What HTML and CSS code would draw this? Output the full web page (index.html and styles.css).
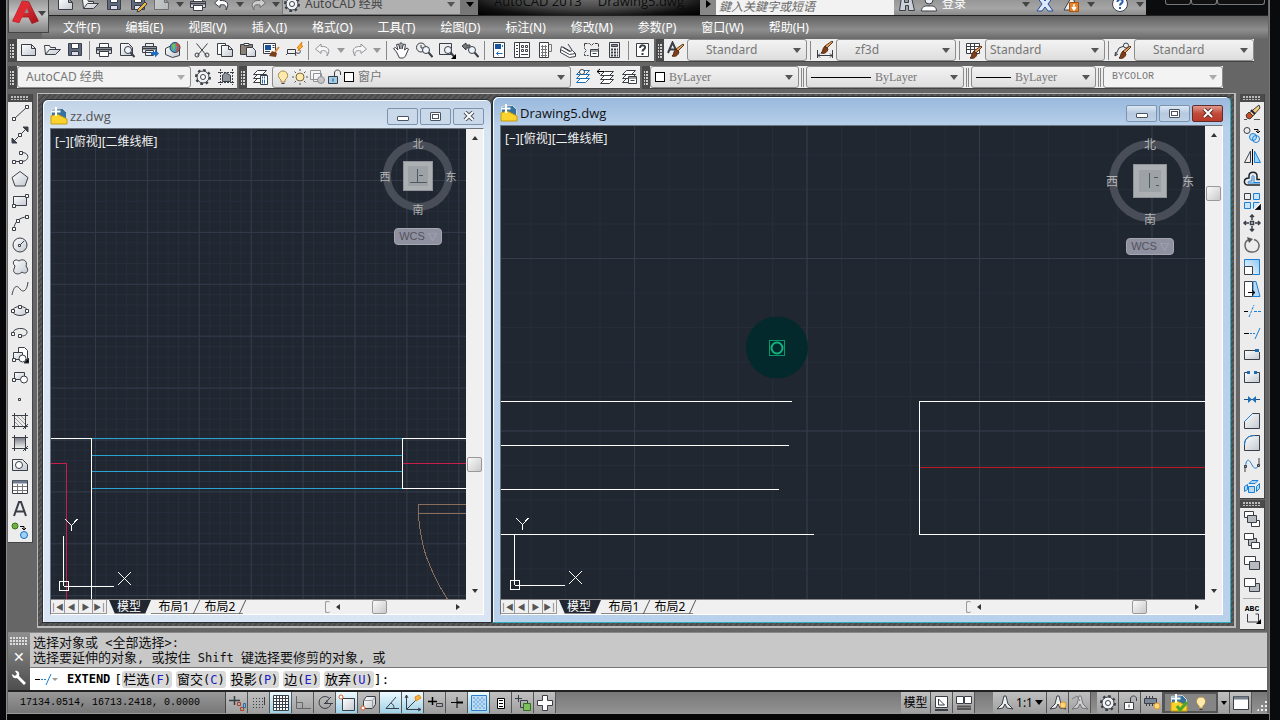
FILE: index.html
```html
<!DOCTYPE html>
<html lang="zh-CN">
<head>
<meta charset="utf-8">
<meta name="viewport" content="width=device-width, initial-scale=1">
<title>AutoCAD 2013 - Drawing5.dwg</title>
<link rel="stylesheet" href="styles.css">
</head>
<body>
<svg class="defs" aria-hidden="true">
<defs>
<linearGradient id="gr" x1="0" y1="0" x2="1" y2="1"><stop offset="0" stop-color="#fff"/><stop offset="1" stop-color="#c3c8d0"/></linearGradient>
<linearGradient id="gb" x1="0" y1="1" x2="1" y2="0"><stop offset="0" stop-color="#fff"/><stop offset="1" stop-color="#8fc6ef"/></linearGradient>
<linearGradient id="gd" x1="0" y1="0" x2="0" y2="1"><stop offset="0" stop-color="#777b84"/><stop offset="1" stop-color="#f5f5f5"/></linearGradient>
<linearGradient id="red" x1="0" y1="0" x2="1" y2="1"><stop offset="0" stop-color="#f4444a"/><stop offset="1" stop-color="#a90f18"/></linearGradient>
<pattern id="fine" width="10.38" height="10.38" patternUnits="userSpaceOnUse" x="95" y="180"><path d="M.5 0V11M0 .5H11" stroke="#262d3b" fill="none"/></pattern>
<pattern id="fineMajor" width="51.9" height="51.9" patternUnits="userSpaceOnUse" x="95" y="180"><path d="M.5 0V52M0 .5H52" stroke="#323a4a" fill="none"/></pattern>
<pattern id="wide" width="34.5" height="34.5" patternUnits="userSpaceOnUse" x="634" y="258"><path d="M.5 0V35M0 .5H35" stroke="#252d39" fill="none"/></pattern>
<pattern id="wideMajor" width="172.5" height="172.5" patternUnits="userSpaceOnUse" x="634" y="258"><path d="M.5 0V173M0 .5H173" stroke="#343c4b" fill="none"/></pattern>
<g id="brush"><path d="M17 4l-6 6-2-2 7-5z" fill="#e9a05a" stroke="#5c3a1f"/><path d="M9 8l3 3c-1 4-4 5-7 4 2-1 1-4 4-7z" fill="#7d3f1b" stroke="#52280f"/></g>
<g id="new"><path d="M1.500 3.500h10l4 4v7h-14zM11.500 3.500v4h4" fill="url(#gr)"/></g>
<g id="open"><path d="M2.500 13.500l-1-9h5l1 2h5v2M2.500 13.500l4-5h11l-5 5z" fill="url(#gr)"/></g>
<g id="save"><path d="M2.500 2.500h13v12h-13z" fill="#5f6b7c"/><path d="M5.500 2.500h7v5h-7z" fill="#fff"/><path d="M5.500 10.500h7v4h-7z" fill="#dde"/></g>
<g id="print"><path d="M4.500 6V2.500h9V6" fill="#fff"/><path d="M1.500 6.500h15v6h-15z" fill="#d5d8de"/><path d="M4 10.500h10M4.500 10.500v5h9v-5" fill="#fff"/><path d="M2 8.500h14" stroke-width="2"/></g>
<g id="mag"><circle cx="10" cy="9" r="3.500" fill="#eef6fc"/><path d="M12.500 11.500l4 4.500" stroke-width="2"/></g>
<g id="preview"><path d="M2.500 2.500h8l4 4v8h-12z" fill="url(#gr)"/><use href="#mag"/></g>
<g id="publish"><path d="M4.500 5V2.500h8V5M1.500 5.500h14v6h-14zM4.500 9.500h8v5h-8z" fill="#eceef2"/><path d="M2 7.500h13" stroke-width="2"/><path d="M10 11h4V8.500l4 4-4 4V14h-4z" fill="#1b6ec2" stroke="none"/></g>
<g id="globe"><path d="M1.500 7.500l8-4 6 3v8l-7 2-7-3z" fill="url(#gr)"/><circle cx="11" cy="6.500" r="5" fill="#3d9fd8"/><path d="M8 4c3-3 4 0 3 2s0 5-2 3z" fill="#7bbf3d" stroke="none"/><path d="M12 3c3 1 3 5 0 7" stroke="#e0482f" stroke-width="2"/></g>
<g id="cut"><path d="M3.500 2.500l10 12M14.500 2.500l-10 12"/><circle cx="4" cy="14" r="2"/><circle cx="14" cy="14" r="2"/></g>
<g id="copy"><path d="M1.500 2.500h8v11h-8z" fill="#fff"/><path d="M5.500 4.500h7l4 4v7h-11zM12.500 4.500v4h4" fill="url(#gr)"/></g>
<g id="paste"><path d="M1.500 3.500h12v10h-12z" fill="#8d8175"/><path d="M5 2.500h5v2H5z" fill="#fff"/><path d="M7.500 6.500h6l3 3v6h-9z" fill="url(#gr)"/></g>
<g id="match"><path d="M1.500 2.500h12v10h-12z" fill="#fff"/><path d="M3 4h6v5H3z" fill="#17529c" stroke="none"/><path d="M10.500 4.500h2M10.500 6.500h2M3 10.500h5"/><path d="M17 6l-4 5" stroke="#df8a3b" stroke-width="2"/><path d="M10 10l5 2-1 4-7-1z" fill="#7d3f1b" stroke="none"/></g>
<g id="bedit"><path d="M2.500 8.500h8v4h-8zM10.500 11.500c4 2 6 0 4-3"/><path d="M3 12l-2 2M10 12l1 3"/><path d="M12 7l5-6-1 4h2l-5 5 1-3z" fill="#ffae2b" stroke="#e18518"/></g>
<g id="undo"><path d="M7 3L1.500 8 7 12.500V10c4-1 7 0 6 5 4-6 1-10-6-9.500z" fill="#fff"/></g>
<g id="redo"><path d="M11 3l5.500 5-5.500 4.500V10c-4-1-7 0-6 5-4-6-1-10 6-9.500z" fill="#fff"/></g>
<g id="pan"><path d="M4.500 11L1.500 7.500l2-1L6 9 4.500 3.500l2-.5 1.500 5V2h2v6l1.500-5 2 .5L12.500 9l2.500-2 1.500 1-3 7-2 2h-4z" fill="#fff"/></g>
<g id="zrt"><circle cx="6" cy="6.500" r="4.500"/><path d="M6 4v3h4"/><use href="#mag" x="1"/></g>
<g id="zwin"><path d="M1.500 2.500h12v11h-12z"/><use href="#mag"/><path d="M18 13v5h-5z" fill="#000" stroke="none"/></g>
<g id="zprev"><path d="M1 5l4-3v2h4v3H5v2z" fill="#777"/><use href="#mag" x="1"/></g>
<g id="props"><path d="M3.500 1.500h11v15h-11z" fill="#fff"/><path d="M5 3h6v5H5z" fill="#17529c" stroke="none"/><path d="M6.500 12.500h6M6.500 12.500l2-2M6.500 12.500l2 2M12.500 4v2" stroke="#246bb2"/></g>
<g id="dc"><path d="M1.500 1.500h15v15h-15zM6.500 2v14" fill="#fff"/><path d="M3 4.500h2M3 7.500h2M3 10.500h2M3 13.500h2M8.500 4.500h2v2h-2zM12.500 4.500h2v2h-2zM8.500 8.500h2v2h-2zM12.500 8.500h2v2h-2zM8 13.500h7"/></g>
<g id="pal"><path d="M3.500 1.500h9v15h-9z" fill="#fff"/><path d="M12.500 3.500h3v7h-3M5 5.500h6M5 8.500h6M5 11.500h6M5 14.500h6M6.500 4v12M9.500 4v12" stroke="#777"/></g>
<g id="sheet"><path d="M1.500 8.500l9 5 6-1-3-3-3 1-8-5zM1.500 8.500v3l9 5 6-1v-3M4 6l7 4M9 3l4 6" fill="#fff"/></g>
<g id="markup"><path d="M2.500 2.500h5l2 2 2-2h5v5l-2 2M2.500 2.500v5l2 2-2 2v3h4" stroke-dasharray="3 1"/><path d="M8.500 8.500h8v7h-8zM8.500 10h8M10.500 12.500h4" fill="#fff"/></g>
<g id="calc"><path d="M4.500 1.500h10v15h-10z" fill="#eee"/><path d="M6.500 3.500h6v2h-6z" fill="#8a909a"/><path d="M6 8.500h7M6 11.500h7M6 14.500h7" stroke-dasharray="2 1" stroke-width="2"/></g>
<g id="help"><path d="M2.500 2.500h12v13h-12z" fill="#fff"/><path d="M6 7c0-4 6-3 5 0-.5 1.500-2.500 1.500-2.500 3.500M8.500 12v2" stroke-width="2"/></g>
<g id="tstyle"><path d="M1 12L5.500 1.500 9.500 10M3 8.500h5" stroke-width="2"/><use href="#brush"/></g>
<g id="dstyle"><path d="M1.500 9v8M16.500 9v8M2 14.500h14M4 12.500l-2 2 2 2M14 12.500l2 2-2 2"/><use href="#brush" x="0" y="-3"/></g>
<g id="tbstyle"><path d="M1.500 2.500h13v10h-13zM2 5.500h12M2 8.500h12M5.500 3v9M9.500 3v9" fill="#fff"/><use href="#brush" y="2"/></g>
<g id="mstyle"><path d="M1 15L5 7l5-2M1 15l.5-4M1 15l3-2"/><circle cx="12" cy="4.500" r="2.500"/><use href="#brush" y="2"/></g>
<g id="gear"><circle cx="9" cy="9" r="6" fill="#f0f1f4"/><circle cx="9" cy="9" r="7" stroke-dasharray="2.700 2.790" stroke-width="2"/><circle cx="9" cy="9" r="2.500" fill="#fff"/></g>
<g id="wsset"><path d="M1 4.500h16M1 14.500h16M3.500 1v16M15.500 1v16" stroke-dasharray="2 1"/><path d="M5.500 7l3-2.500 5 3v6h-8z" fill="#8e949e"/></g>
<g id="layers"><path d="M2.500 6.500l4-4h9l-4 4zM2.500 10.500l4-4h9l-4 4zM2.500 14.500l4-4h9l-4 4z" fill="#fff"/></g>
<g id="laymgr"><use href="#layers"/><path d="M9.500 7.500h7v9h-7z" fill="#fff"/><path d="M11 9.500h4M11 12.500h4M11 14.500h4" stroke="#246bb2" stroke-width="2" stroke-dasharray="1 1"/></g>
<g id="laycur"><g stroke="#1a6fb5"><use href="#layers"/></g><circle cx="8" cy="4" r="2.500" fill="#fff"/></g>
<g id="layprev"><use href="#layers" x="1" y="1"/><path d="M0 3.500h7M3 1L0 3.500 3 6" stroke="#000"/></g>
<g id="laystate"><use href="#layers"/><path d="M8.500 8.500h8v7h-8zM8.500 10h8M10.500 12.500h4" fill="#fff"/></g>
<g id="bulb"><path d="M7 12c-5-4-2-9 2-9s7 5 2 9v2H7z" fill="#ffe9ad" stroke="#a88a4a"/><path d="M7.500 15.500h3"/></g>
<g id="sun"><circle cx="9" cy="9" r="4" fill="#ffe9ad" stroke="#7d6a3c"/><path d="M9 1v2M9 15v2M1 9h2M15 9h2M3.500 3.500L5 5M13 13l1.500 1.500M14.500 3.500L13 5M5 13l-1.500 1.500" stroke="#555"/></g>
<g id="vpf" opacity=".5"><path d="M2.500 2.500h10v9h-10zM5.500 5.500h8v8h-8z" fill="#fff"/><circle cx="13" cy="12" r="3.500" fill="#aaa"/></g>
<g id="lock"><path d="M9.500 8V5c0-4 6-4 6 0v2"/><path d="M3.500 8.500h9v7h-9z" fill="#9dcdee"/><path d="M8 10.500v3"/></g>
<g id="unlock"><path d="M9.500 8V5c0-4 6-4 6 0v2"/><path d="M3.500 8.500h9v7h-9z" fill="#fff"/><path d="M8 10.500v3"/></g>
<g id="logo"><path d="M2 25L14 0l8 1 12 24-8 3-4-8h-9l-3 7z" fill="url(#red)" stroke="#a01820"/><path d="M15 15l4-8 3 8z" fill="#8f8f93" stroke="none"/><path d="M14 0L2 25l8 2 11-20z" fill="#e02931" stroke="none"/></g>
<g id="dwg"><path d="M1.500 2.500l11-1 4 4v11h-15z" fill="#36729e" stroke="#d3dce5"/><path d="M1 9l6-2 10 5v5H1z" fill="#fcd22c" stroke="#c59c11"/><path d="M6 0v9M1.500 4.500h9" stroke="#fff" stroke-width="2"/></g>
<g id="line"><path d="M3 15L16 3"/><path d="M1.500 13.500h3v3h-3zM14.500 1.500h3v3h-3z" fill="#fff"/></g>
<g id="xline"><path d="M2 16L16 2"/><path d="M1 17v-5l5 5zM17 1v5l-5-5z" fill="#3a3f47"/><path d="M7.500 7.500h3v3h-3z" fill="#fff"/></g>
<g id="pline"><path d="M3 13.500h7c9 0 9-9 1-9"/><path d="M1.500 12.500h3v3h-3zM8.500 12.500h3v3h-3zM8.500 3.500h3v3h-3z" fill="#fff"/></g>
<g id="poly"><path d="M9 1.500l8 6-3 8.500H4L1 7.500z" fill="url(#gr)"/></g>
<g id="rect"><path d="M2.500 4.500h13v9h-13z" fill="url(#gr)"/><path d="M1.500 12.500h3v3h-3zM14.500 2.500h3v3h-3z" fill="#fff"/></g>
<g id="arc"><path d="M3 15C3 8 9 3 16 3"/><path d="M1.500 13.500h3v3h-3zM5.500 5.500h3v3h-3zM14.500 1.500h3v3h-3z" fill="#fff"/></g>
<g id="circle"><circle cx="9" cy="9" r="7" fill="url(#gr)"/><path d="M9 9l4-4"/><path d="M7.500 8.500h2v2h-2z" fill="#fff"/></g>
<g id="cloud"><path d="M4 8C0 4 4 0 8 3c4-3 9 0 7 5 4 5 0 9-4 6-4 4-10 1-8-3z" fill="url(#gr)"/></g>
<g id="spline"><path d="M1 15C3 5 6 5 9 9s7 2 8-7"/></g>
<g id="ellipse"><ellipse cx="9" cy="9" rx="7.500" ry="4.500" fill="url(#gr)"/><path d="M.5 7.500h3v3h-3zM14.500 7.500h3v3h-3zM7.500 3.500h3v3h-3z" fill="#fff"/></g>
<g id="earc"><path d="M2 10C1 3 16 3 16 8c0 4-4 4-7 4"/><path d="M.5 8.500h3v3h-3zM7.500 10.500h3v3h-3z" fill="#fff"/></g>
<g id="insert"><path d="M7.500 6V1.500h6l3 3v9h-3" fill="#fff"/><path d="M2.500 6.500h9v7h-9z" fill="url(#gr)"/><circle cx="11.500" cy="12.500" r="3.500" fill="#fff"/><path d="M1.500 12.500h3v3h-3z" fill="#fff"/><path d="M18 12v5h-5z" fill="#000"/></g>
<g id="block"><path d="M3.500 4.500h10v7h-10z" fill="url(#gr)"/><circle cx="13" cy="11.500" r="3.500" fill="#fff"/><path d="M1.500 10.500h3v3h-3z" fill="#fff"/></g>
<g id="point"><path d="M7.500 8.500h2v2h-2z"/></g>
<g id="hatch"><path d="M4 6l8 8M4 10l4 4M6 4l8 8M10 4l4 4" stroke="#999"/><path d="M1 3.500h16M1 14.500h16M3.500 1v16M14.500 1v16M12 17l5-5"/></g>
<g id="grad"><path d="M3.500 3.500h11v11h-11z" fill="url(#gd)"/><path d="M1 3.500h16M1 14.500h16M3.500 1v16M14.500 1v16M12 17l5-5"/></g>
<g id="region"><path d="M1.500 3.500h10l5 5v6h-15z" fill="url(#gr)"/><circle cx="8" cy="9" r="3.500" fill="#fff"/></g>
<g id="table"><path d="M1.500 2.500h15v13h-15z" fill="#fff"/><path d="M2 4h14" stroke-width="3" stroke="#6f7b8e"/><path d="M2 8.500h14M2 12.500h14M6.500 6v9M11.500 6v9" stroke="#777"/></g>
<g id="mtext"><path d="M3 16L8 2h2l5 14M5 11.500h8" stroke-width="2"/></g>
<g id="addsel"><circle cx="4" cy="4" r="3" fill="#72b046" stroke="#397019"/><circle cx="13" cy="13" r="3.500" fill="#9fd2fb" stroke="#1a6fb5"/><path d="M9 4.500h4v3M11 6l2 2 2-2" stroke="#000"/></g>
<g id="erase"><path d="M1 15.500h3M11 15.500h6" stroke="#555"/><path d="M16 1l1 3-8 9-4-3z" fill="#f4cb71"/><path d="M6 8l4 4-3 3-3-1-1-3z" fill="#cc4b22"/><path d="M8 6l4 4" stroke="#224" stroke-width="2"/></g>
<g id="copyobj"><circle cx="4" cy="4.500" r="3"/><circle cx="10" cy="11" r="3.500" stroke="#1a7fd5" fill="#bfe0fa"/><circle cx="13" cy="13" r="3.500" stroke="#1a7fd5"/><path d="M11 3.500h4v3M13 5l2 2 2-2" stroke="#000"/></g>
<g id="mirror"><path d="M7.500 3v11.500h-6z"/><path d="M11.500 3v11.500h6z" fill="#9fd2fb" stroke="#1a7fd5"/><path d="M9.500 1v16" stroke="#000"/></g>
<g id="offset"><path d="M17 9.500h-3V6c0-5-8-5-8 0v2c-6 0-6 7-1 7h12" stroke="#1d2229" stroke-width="1.500"/><path d="M17 12.500h-6V7c0-2-2-2-2 0v4c-4 0-4 1-4 2h12" stroke="#1a7fd5"/></g>
<g id="array"><path d="M1.500 1.500h6v6h-6z"/><path d="M10.500 1.500h6v6h-6zM1.500 10.500h6v6h-6zM10.500 16.500v-6h6" stroke="#1a7fd5" fill="#cae5fa"/><path d="M18 12v6h-6z" fill="#000"/></g>
<g id="move"><path d="M7.500 7.500h3v3h-3zM9 1v5M9 12v5M1 9h5M12 9h5M7 3l2-2 2 2M7 15l2 2 2-2M3 7L1 9l2 2M15 7l2 2-2 2" stroke-width="1.500"/></g>
<g id="rotate"><path d="M6 3.500C0 6 1 15 8 16c9 1 11-10 3-12.500" stroke="#666" stroke-width="1.500"/><path d="M4 1l6 2-4 4z" fill="#555" stroke="none"/></g>
<g id="scale"><path d="M1.500 8V1.500h15v15H10" stroke="#1a7fd5" fill="url(#gb)"/><path d="M1.500 8.500h8v8h-8z" fill="#fff"/></g>
<g id="stretch"><path d="M10 1.500h3l4 15h-7z" stroke="#1a7fd5" fill="#b4daf8"/><path d="M1.500 1.500h8v15h-8z" fill="#fff"/><path d="M5 12.500h7M9 10l3 2.500L9 15" stroke="#000"/></g>
<g id="trim"><path d="M1 9.500h4" stroke="#000"/><path d="M6 15L11 3M11 9.500h7" stroke="#1a7fd5" stroke-dasharray="3 1"/></g>
<g id="extend"><path d="M1 9.500h5" stroke="#000"/><path d="M7 9.500h5" stroke-dasharray="2 1" stroke="#1a7fd5"/><path d="M12 15l5-11" stroke="#1a7fd5"/></g>
<g id="break1"><path d="M12 4.500H1.500v9h15V6" fill="url(#gr)"/><path d="M12 3h4v3h-4z" fill="#1a6fb5" stroke="none"/></g>
<g id="break2"><path d="M5 4.500H1.500v10h15v-10H14" fill="url(#gr)"/><path d="M4 3h3v3H4zM11 3h3v3h-3z" fill="#1a6fb5" stroke="none"/></g>
<g id="join"><path d="M1 9.500h16" stroke="#1a4f85"/><path d="M5 6l4 3.500L5 13zM13 6L9 9.500l4 3.500z" fill="#1a6fb5" stroke="none"/></g>
<g id="chamfer"><path d="M1.500 9.500v7h15v-15h-7z" fill="url(#gr)"/><path d="M1.500 9.500l8-8" stroke="#1a7fd5"/></g>
<g id="fillet"><path d="M1.500 11v5.500h15v-15H12C5 1.500 1.500 5 1.500 11z" fill="url(#gr)"/><path d="M1.500 11C1.500 5 5 1.500 12 1.500" stroke="#1a7fd5"/></g>
<g id="blend"><path d="M2 16V9M16 2v8"/><path d="M2.500 10C4 0 7 5 9 9s5 4 6 1" stroke="#1a7fd5"/><path d="M1.500 9.500h2v2h-2zM14.500 8.500h2v2h-2z"/></g>
<g id="explode"><path d="M1.500 8.500l3-2v5l-3 2zM5.500 8.500h6v6h-6zM6 5.500l3-3h6l-3 3zM13.500 8.500l3-3v5l-3 3z" stroke="#1a7fd5" fill="#b4daf8"/></g>
<g id="front"><path d="M1.500 1.500h9v6h-9zM8.500 10.500h8v6h-8z" fill="#fff"/><path d="M4.500 5.500h9v7h-9z" fill="#b7bbc0"/></g>
<g id="back"><path d="M5.500 6.500h8v7h-8z" fill="#b7bbc0"/><path d="M1.500 1.500h9v6h-9zM8.500 10.500h8v6h-8z" fill="#fff"/></g>
<g id="above"><path d="M1.500 2.500h11v8h-11z" fill="#fff"/><path d="M6.500 7.500h10v8h-10z" fill="#b7bbc0"/></g>
<g id="under"><path d="M6.500 7.500h10v8h-10z" fill="#b7bbc0"/><path d="M1.500 2.500h11v8h-11z" fill="#fff"/></g>
<g id="snapi"><path d="M1 6.500h11M6.500 2v9" stroke-width="1.500"/><path d="M9.500 8.500h3v3h-3zM12.500 13.500h3v3h-3z" stroke="#b5402a"/><path d="M15.500 9.500h2v4h-2z" stroke="#1a6fb5"/></g>
<g id="dots"><path d="M3 4.500h10M3 7.500h10M3 10.500h10M3 13.500h12" stroke-dasharray="1 2"/><path d="M14.500 3v8"/></g>
<g id="gridi"><path d="M1.500 1.500h15v15h-15zM4.500 2v15M7.500 2v15M10.500 2v15M13.500 2v15M2 4.500h15M2 7.500h15M2 10.500h15M2 13.500h15" fill="#fff"/></g>
<g id="ortho"><path d="M2.500 2v12.500H17M2.500 8.500h6v6" stroke="#666"/></g>
<g id="polar"><path d="M13 4a6 6 0 1 0 2 5M8 10l7-7M8 9.500h9M11 6v4"/></g>
<g id="osnap"><path d="M4.500 4.500h12v12h-12z" fill="url(#gr)"/><circle cx="3" cy="3" r="2" fill="#fff" stroke="#d8602a"/></g>
<g id="os3"><path d="M3.500 6.500l3-4h9v8l-3 4h-9z" fill="url(#gr)"/><path d="M4 6.500h8.500v8M12.500 6.500l3-4" stroke="#999"/><circle cx="3" cy="14" r="2" fill="#fff" stroke="#d8602a"/></g>
<g id="otrack"><path d="M14 3L4 14.500h13M9 9c2 1 3 3 3 5"/></g>
<g id="ducs"><path d="M2.500 1v14.500H17M1 4l1.500-3L4 4M14 14l3 1.500-3 1.500M3 15L14 4"/><path d="M11 3l4-2 2 3-5 3z" fill="#ffb33b" stroke="#df8a1b"/></g>
<g id="dyn"><path d="M2 7.500h9M6.500 3v8" stroke="#000" stroke-width="1.500"/><path d="M10.500 9.500h6v3h-6z"/></g>
<g id="lwt"><path d="M3 8.500h6M9 3v11" stroke="#000"/><path d="M9 8.500h6" stroke="#000" stroke-width="2"/></g>
<g id="tpy"><path d="M1.500 1.500h15v15h-15z" fill="#bfdcf5" stroke="#2f7fc6"/><path d="M3 4h12M3 8h12M3 12h12" stroke="#86b9e6" stroke-width="2" stroke-dasharray="2 2"/><path d="M5 6h10M5 10h10M5 14h10" stroke="#86b9e6" stroke-width="2" stroke-dasharray="2 2"/></g>
<g id="qp"><path d="M5.500 4.500h7v10h-7z" fill="#fff" stroke="#000"/><path d="M7 6.500h4M7 9.500h4M7 12.500h4" stroke="#000"/></g>
<g id="sc"><path d="M1 4.500h7M4.500 1v7M6.500 6.500h7v7h-7z"/><path d="M9.500 9.500h7v7h-7z" fill="#7cbf5d" stroke="#31701d"/></g>
<g id="am"><path d="M6.500 1.500h5v5h5v5h-5v5h-5v-5h-5v-5h5z" fill="#fff"/></g>
<g id="pspace"><path d="M2.500 2.500h12v11h-12z" fill="#fff"/><path d="M5.500 5v6h6z"/><path d="M2 16h13" stroke-width="2"/></g>
<g id="qv"><path d="M1.500 2.500h7v7h-7zM9.500 2.500h7v7h-7z" fill="#fff"/><path d="M2 12.500h14M2 15h14" stroke-width="2" stroke="#555"/></g>
<g id="ann"><path d="M8 2h2l2 8 5 5-6-1-2-4-2 4-6 1 5-5z" fill="#eee"/></g>
<g id="annv"><use href="#ann"/><circle cx="14" cy="11" r="3" fill="#ffd77c" stroke="#e99a2b"/></g>
<g id="anna" opacity=".5"><use href="#ann"/><path d="M1 5l5-3 3 5"/></g>
<g id="hw"><path d="M1.500 4.500h12v5h-12zM3.500 2v2M6.500 2v2M9.500 2v2M3.500 10v2M6.500 10v2M9.500 10v2" fill="#7a8595"/><circle cx="14" cy="12" r="3" fill="#ffd77c" stroke="#e99a2b"/></g>
<g id="dwgok"><use href="#dwg"/><path d="M7 12l3 4 7-8" stroke="#4da72b" stroke-width="3"/></g>
<g id="clean"><path d="M1.500 2.500h15v13h-15z" fill="#fff"/><path d="M2 4h14" stroke="#76808c" stroke-width="3"/></g>
<g id="wrench"><path d="M2 5c0 4 3 5 5 4l7 7 2-2-7-7c1-3-1-6-4-5l2 3-2 2z" fill="#fff" stroke="none"/></g>
<g id="binoc"><path d="M3.500 2.500h3v5h4v-5h3l3 13h-6v-5h-3v5h-6z" fill="#ccd2dc"/></g>
<g id="user"><circle cx="9" cy="5" r="4" fill="#e8ebf0"/><path d="M1.500 16c0-4 3-5 5-5h5c2 0 5 1 5 5z" fill="#fff"/></g>
<g id="xchg"><path d="M1 2h5l3 4 3-4h5l-5 7 5 7h-5l-3-4-3 4H1l5-7z" fill="#dce8fb" stroke="#2a4d96"/></g>
<g id="a360"><path d="M2 15L10 1l6 14z" fill="#eee"/><path d="M7.500 7.500h9v9h-9z" fill="#e5822b" stroke="#a75210"/><path d="M12 9v5M10 12l2 3 2-3" stroke="#fff" stroke-width="1.500"/></g>
<g id="qmark"><circle cx="9" cy="9" r="7.500" fill="#fff"/><path d="M6.500 7c0-4 6-3 5 0-.5 1.500-2.500 1.500-2.500 3.500M9 12v2" stroke="#255bb0" stroke-width="2"/></g>
</defs>
</svg>

<div class="app">
<header class="top">
  <button class="logo" aria-label="应用程序菜单"><svg width="29" height="26" viewBox="0 0 36 30"><use href="#logo" fill="none"/></svg><span class="tri"></span></button>
  <div class="titlebar">
    <div class="quick">
      <button class="b" aria-label="新建"><svg class="i"><use href="#new"/></svg></button>
      <button class="b" aria-label="打开"><svg class="i"><use href="#open"/></svg></button>
      <button class="b" aria-label="保存"><svg class="i"><use href="#save"/></svg></button>
      <button class="b" aria-label="另存为"><svg class="i"><use href="#save"/><path d="M9 14l7-7 2 2-7 7-3 1z" fill="#f2b53c"/></svg></button>
      <button class="b off" aria-label="上传"><svg class="i"><use href="#new"/></svg></button>
      <button class="dd" aria-label="更多"><span class="tri"></span></button>
      <button class="b" aria-label="打印"><svg class="i"><use href="#print"/></svg></button>
      <button class="b" aria-label="放弃"><svg class="i"><use href="#undo"/></svg></button>
      <button class="dd" aria-label="放弃列表"><span class="tri"></span></button>
      <button class="b off" aria-label="重做"><svg class="i"><use href="#redo"/></svg></button>
      <button class="dd" aria-label="重做列表"><span class="tri"></span></button>
      <div class="combo ws-top"><svg class="i"><use href="#gear"/></svg><select aria-label="工作空间"><option>AutoCAD 经典</option></select></div>
      <button class="dd more" aria-label="自定义快速访问"><span class="tri"></span></button>
    </div>
    <div class="caption"><span>AutoCAD 2013</span><span>Drawing5.dwg</span></div>
    <div class="info">
      <button class="dd side" aria-label="收拢"><i></i></button>
      <input class="search" type="text" aria-label="搜索" placeholder="鍵入关鍵字或短语">
      <button class="b" aria-label="查找"><svg class="i"><use href="#binoc"/></svg></button>
      <button class="login"><svg class="i"><use href="#user"/></svg>登录</button>
      <button class="dd push" aria-label="登录选项"><span class="tri"></span></button>
      <button class="b" aria-label="Exchange"><svg class="i"><use href="#xchg"/></svg></button>
      <button class="b" aria-label="联机"><svg class="i"><use href="#a360"/></svg></button>
      <button class="dd" aria-label="联机选项"><span class="tri"></span></button>
      <button class="b helpb" aria-label="帮助"><svg class="i"><use href="#qmark"/></svg></button>
      <button class="dd" aria-label="帮助选项"><span class="tri"></span></button>
    </div>
    <div class="syswin"><button aria-label="最小化"></button><button aria-label="还原"></button><button aria-label="关闭"></button></div>
  </div>
  <nav class="menu">
    <button>文件(F)</button><button>编辑(E)</button><button>视图(V)</button><button>插入(I)</button><button>格式(O)</button><button>工具(T)</button><button>绘图(D)</button><button>标注(N)</button><button>修改(M)</button><button>参数(P)</button><button>窗口(W)</button><button>帮助(H)</button>
  </nav>
</header>

<div class="bars">
  <div class="bar">
    <span class="grip"></span>
    <div class="set">
      <button class="b" aria-label="新建"><svg class="i"><use href="#new"/></svg></button>
      <button class="b" aria-label="打开"><svg class="i"><use href="#open"/></svg></button>
      <button class="b" aria-label="保存"><svg class="i"><use href="#save"/></svg></button>
      <i class="sep"></i>
      <button class="b" aria-label="打印"><svg class="i"><use href="#print"/></svg></button>
      <button class="b" aria-label="打印预览"><svg class="i"><use href="#preview"/></svg></button>
      <button class="b" aria-label="发布"><svg class="i"><use href="#publish"/></svg></button>
      <button class="b" aria-label="三维打印"><svg class="i"><use href="#globe"/></svg></button>
      <i class="sep"></i>
      <button class="b" aria-label="剪切"><svg class="i"><use href="#cut"/></svg></button>
      <button class="b" aria-label="复制"><svg class="i"><use href="#copy"/></svg></button>
      <button class="b" aria-label="粘贴"><svg class="i"><use href="#paste"/></svg></button>
      <button class="b" aria-label="特性匹配"><svg class="i"><use href="#match"/></svg></button>
      <button class="b" aria-label="块编辑器"><svg class="i"><use href="#bedit"/></svg></button>
      <i class="sep"></i>
      <button class="b off" aria-label="放弃"><svg class="i"><use href="#undo"/></svg></button>
      <button class="dd off" aria-label="放弃列表"><span class="tri"></span></button>
      <button class="b off" aria-label="重做"><svg class="i"><use href="#redo"/></svg></button>
      <button class="dd off" aria-label="重做列表"><span class="tri"></span></button>
      <i class="sep"></i>
      <button class="b" aria-label="平移"><svg class="i"><use href="#pan"/></svg></button>
      <button class="b" aria-label="实时缩放"><svg class="i"><use href="#zrt"/></svg></button>
      <button class="b" aria-label="窗口缩放"><svg class="i"><use href="#zwin"/></svg></button>
      <button class="b" aria-label="缩放上一个"><svg class="i"><use href="#zprev"/></svg></button>
      <i class="sep"></i>
      <button class="b" aria-label="特性"><svg class="i"><use href="#props"/></svg></button>
      <button class="b" aria-label="设计中心"><svg class="i"><use href="#dc"/></svg></button>
      <button class="b" aria-label="工具选项板"><svg class="i"><use href="#pal"/></svg></button>
      <button class="b" aria-label="图纸集"><svg class="i"><use href="#sheet"/></svg></button>
      <button class="b" aria-label="标记集"><svg class="i"><use href="#markup"/></svg></button>
      <button class="b" aria-label="计算器"><svg class="i"><use href="#calc"/></svg></button>
      <i class="sep"></i>
      <button class="b" aria-label="帮助"><svg class="i"><use href="#help"/></svg></button>
    </div>
    <span class="grip"></span>
    <div class="set">
      <button class="b" aria-label="文字样式"><svg class="i"><use href="#tstyle"/></svg></button>
      <div class="combo w120 indent"><select aria-label="文字样式"><option>Standard</option></select></div><i class="sep"></i>
      <button class="b" aria-label="标注样式"><svg class="i"><use href="#dstyle"/></svg></button>
      <div class="combo w120 indent"><select aria-label="标注样式"><option>zf3d</option></select></div><i class="sep"></i>
      <button class="b" aria-label="表格样式"><svg class="i"><use href="#tbstyle"/></svg></button>
      <div class="combo w120"><select aria-label="表格样式"><option>Standard</option></select></div><i class="sep"></i>
      <button class="b" aria-label="多重引线样式"><svg class="i"><use href="#mstyle"/></svg></button>
      <div class="combo w120 indent"><select aria-label="多重引线样式"><option>Standard</option></select></div>
    </div>
  </div>
  <div class="bar">
    <span class="grip"></span>
    <div class="set">
      <div class="combo w174 pale"><select aria-label="工作空间"><option>AutoCAD 经典</option></select></div>
      <button class="b" aria-label="工作空间设置"><svg class="i"><use href="#gear"/></svg></button>
      <button class="b" aria-label="我的工作空间"><svg class="i"><use href="#wsset"/></svg></button>
    </div>
    <span class="grip"></span>
    <div class="set">
      <button class="b wide" aria-label="图层特性"><svg class="i"><use href="#laymgr"/></svg></button>
      <div class="combo layer"><svg class="i"><use href="#bulb"/></svg><svg class="i"><use href="#sun"/></svg><svg class="i"><use href="#vpf"/></svg><svg class="i"><use href="#lock"/></svg><i class="swatch"></i><select aria-label="图层"><option>窗户</option></select></div>
      <button class="b" aria-label="置为当前"><svg class="i"><use href="#laycur"/></svg></button>
      <button class="b" aria-label="上一个图层"><svg class="i"><use href="#layprev"/></svg></button>
      <button class="b" aria-label="图层状态"><svg class="i"><use href="#laystate"/></svg></button>
    </div>
    <span class="grip"></span>
    <div class="set song">
      <div class="combo w148"><i class="swatch"></i><select aria-label="颜色"><option>ByLayer</option></select></div><i class="sep dbl"></i>
      <div class="combo w158"><i class="rule"></i><select aria-label="线型"><option>ByLayer</option></select></div><i class="sep dbl"></i>
      <div class="combo w124"><i class="rule short"></i><select aria-label="线宽"><option>ByLayer</option></select></div><i class="sep dbl"></i>
      <div class="combo w120 pale mono"><select aria-label="打印样式" disabled><option>BYCOLOR</option></select></div>
    </div>
  </div>
</div>

<div class="work">
  <aside class="side-tools">
    <div class="vbar"><span class="vgrip"></span>
      <button class="v" aria-label="直线"><svg class="i"><use href="#line"/></svg></button>
      <button class="v" aria-label="构造线"><svg class="i"><use href="#xline"/></svg></button>
      <button class="v" aria-label="多段线"><svg class="i"><use href="#pline"/></svg></button>
      <button class="v" aria-label="多边形"><svg class="i"><use href="#poly"/></svg></button>
      <button class="v" aria-label="矩形"><svg class="i"><use href="#rect"/></svg></button>
      <button class="v" aria-label="圆弧"><svg class="i"><use href="#arc"/></svg></button>
      <button class="v" aria-label="圆"><svg class="i"><use href="#circle"/></svg></button>
      <button class="v" aria-label="修订云线"><svg class="i"><use href="#cloud"/></svg></button>
      <button class="v" aria-label="样条曲线"><svg class="i"><use href="#spline"/></svg></button>
      <button class="v" aria-label="椭圆"><svg class="i"><use href="#ellipse"/></svg></button>
      <button class="v" aria-label="椭圆弧"><svg class="i"><use href="#earc"/></svg></button>
      <button class="v" aria-label="插入块"><svg class="i"><use href="#insert"/></svg></button>
      <button class="v" aria-label="创建块"><svg class="i"><use href="#block"/></svg></button>
      <button class="v" aria-label="点"><svg class="i"><use href="#point"/></svg></button>
      <button class="v" aria-label="图案填充"><svg class="i"><use href="#hatch"/></svg></button>
      <button class="v" aria-label="渐变色"><svg class="i"><use href="#grad"/></svg></button>
      <button class="v" aria-label="面域"><svg class="i"><use href="#region"/></svg></button>
      <button class="v" aria-label="表格"><svg class="i"><use href="#table"/></svg></button>
      <button class="v" aria-label="多行文字"><svg class="i"><use href="#mtext"/></svg></button>
      <button class="v" aria-label="添加选定对象"><svg class="i"><use href="#addsel"/></svg></button>
    </div>
  </aside>

  <main class="mdi">
    <section class="win back">
      <div class="wtitle"><svg class="i"><use href="#dwg"/></svg><h2>zz.dwg</h2>
        <button class="wb" aria-label="最小化"><i class="min"></i></button><button class="wb" aria-label="最大化"><i class="max"></i></button><button class="wb" aria-label="关闭"><svg width="12" height="10"><path d="M2 1l8 8M10 1L2 9" stroke="#4a5360" stroke-width="4"/><path d="M2 1l8 8M10 1L2 9" stroke="#fff" stroke-width="2"/></svg></button></div>
      <div class="wbody">
        <div class="view">
          <svg class="canvas"><g transform="translate(-51 -129)" fill="none" shape-rendering="crispEdges">
            <rect x="0" y="0" width="4000" height="3000" fill="url(#fine)"/><rect x="0" y="0" width="4000" height="3000" fill="url(#fineMajor)"/>
            <path d="M51 463.500H66.500V2000M403 463.500H2000" stroke="#c81e4c"/>
            <path d="M92 438.500H402M92 455.500H402M92 471.500H402M92 488.500H402" stroke="#2ba3d0"/>
            <path d="M51 438.500H91.500V2000M2000 438.500H402.500V488.500H2000" stroke="#fff"/>
            <path d="M2000 504.500H418.500V513.500H2000M418.500 513C419 530 424 552 428 561C434 576 440 588 448 600" stroke="#8a705c"/>
            <g stroke="#fff"><path d="M59.500 581.500h9v9h-9zM63.500 586V536M64 586.500H114"/><path d="M65 519l6.500 6.500 6-6.500M71.500 525v6M118 572l13 13M131 572l-13 13"/></g>
          </g></svg>
          <p class="vlabel">[−][俯视][二维线框]</p>
          <div class="cube">
            <svg width="78" height="82"><circle cx="39" cy="41" r="31" fill="none" stroke="#484d58" stroke-width="8"/><rect x="24.500" y="26.500" width="29" height="29" fill="#adb0b3" stroke="#8f9296"/><rect x="29" y="31" width="20" height="20" fill="#9da2a7"/><path d="M38.500 34v13M31 47.500h17M40 40.500h4" stroke="#505860"/><text x="39" y="13">北</text><text x="6" y="46">西</text><text x="72" y="46">东</text><text x="39" y="79">南</text></svg>
            <button class="wcs">WCS <span>▽</span></button>
          </div>
        </div>
        <div class="vs"><button class="up" aria-label="向上"></button><i class="g310"></i><b></b><i class="g110"></i><button class="down" aria-label="向下"></button></div>
        <div class="foot">
          <div class="tabs"><button class="nv" aria-label="第一个">|◀</button><button class="nv" aria-label="上一个">◀</button><button class="nv" aria-label="下一个">▶</button><button class="nv" aria-label="最后一个">▶|</button><button class="tab on">模型</button><button class="tab">布局1</button><button class="tab">布局2</button></div>
          <div class="hs"><i class="split"></i><button class="prev" aria-label="向左"></button><i class="g26"></i><b></b><i class="g63"></i><button class="next" aria-label="向右"></button></div>
        </div>
        <div class="corner"></div>
      </div>
    </section>

    <section class="win front">
      <div class="wtitle"><svg class="i"><use href="#dwg"/></svg><h2>Drawing5.dwg</h2>
        <button class="wb" aria-label="最小化"><i class="min"></i></button><button class="wb" aria-label="最大化"><i class="max"></i></button><button class="wb close" aria-label="关闭"><svg width="12" height="10"><path d="M2 1l8 8M10 1L2 9" stroke="#5a3030" stroke-width="4"/><path d="M2 1l8 8M10 1L2 9" stroke="#fff" stroke-width="2"/></svg></button></div>
      <div class="wbody">
        <div class="view">
          <svg class="canvas"><g transform="translate(-501 -126)" fill="none" shape-rendering="crispEdges">
            <rect x="0" y="0" width="4000" height="3000" fill="url(#wide)"/><rect x="0" y="0" width="4000" height="3000" fill="url(#wideMajor)"/>
            <path d="M501 401.500H792M501 445.500H789M501 489.500H779M501 534.500H814M4000 401.500H919.500V534.500H4000" stroke="#fff"/>
            <path d="M920 467.500H4000" stroke="#c01820"/>
            <circle cx="777" cy="347.500" r="31" fill="#03292d" shape-rendering="auto"/><path d="M769.500 340.500h15v15h-15z" stroke="#0a9a68"/><circle cx="777" cy="348" r="5.500" stroke="#12b67c" stroke-width="2" shape-rendering="auto"/>
            <g stroke="#fff"><path d="M510.500 580.500h9v9h-9zM514.500 585V535M515 585.500H565"/><path d="M516 518l6.500 6.500 6-6.500M522.500 524v6M569 571l13 13M582 571l-13 13"/></g>
          </g></svg>
          <p class="vlabel">[−][俯视][二维线框]</p>
          <div class="cube big">
            <svg width="90" height="92"><circle cx="45" cy="46" r="37" fill="none" stroke="#484d58" stroke-width="8"/><rect x="28.500" y="29.500" width="33" height="33" fill="#adb0b3" stroke="#8f9296"/><rect x="34" y="35" width="22" height="22" fill="#9da2a7"/><path d="M44.500 38v15M49 42.500h4M51 50.500h3" stroke="#505860"/><text x="45" y="14">北</text><text x="7" y="51">西</text><text x="83" y="51">东</text><text x="45" y="89">南</text></svg>
            <button class="wcs">WCS <span>▽</span></button>
          </div>
        </div>
        <div class="vs"><button class="up" aria-label="向上"></button><i class="g43"></i><b></b><i class="g380"></i><button class="down" aria-label="向下"></button></div>
        <div class="foot">
          <div class="tabs"><button class="nv" aria-label="第一个">|◀</button><button class="nv" aria-label="上一个">◀</button><button class="nv" aria-label="下一个">▶</button><button class="nv" aria-label="最后一个">▶|</button><button class="tab on">模型</button><button class="tab">布局1</button><button class="tab">布局2</button></div>
          <div class="hs"><i class="split"></i><button class="prev" aria-label="向左"></button><i class="g146"></i><b></b><i class="g42"></i><button class="next" aria-label="向右"></button></div>
        </div>
        <div class="corner"></div>
      </div>
    </section>
  </main>

  <aside class="side-tools right">
    <div class="vbar"><span class="vgrip"></span>
      <button class="v" aria-label="删除"><svg class="i"><use href="#erase"/></svg></button>
      <button class="v" aria-label="复制"><svg class="i"><use href="#copyobj"/></svg></button>
      <button class="v" aria-label="镜像"><svg class="i"><use href="#mirror"/></svg></button>
      <button class="v" aria-label="偏移"><svg class="i"><use href="#offset"/></svg></button>
      <button class="v" aria-label="阵列"><svg class="i"><use href="#array"/></svg></button>
      <button class="v" aria-label="移动"><svg class="i"><use href="#move"/></svg></button>
      <button class="v" aria-label="旋转"><svg class="i"><use href="#rotate"/></svg></button>
      <button class="v" aria-label="缩放"><svg class="i"><use href="#scale"/></svg></button>
      <button class="v" aria-label="拉伸"><svg class="i"><use href="#stretch"/></svg></button>
      <button class="v" aria-label="修剪"><svg class="i"><use href="#trim"/></svg></button>
      <button class="v" aria-label="延伸"><svg class="i"><use href="#extend"/></svg></button>
      <button class="v" aria-label="打断于点"><svg class="i"><use href="#break1"/></svg></button>
      <button class="v" aria-label="打断"><svg class="i"><use href="#break2"/></svg></button>
      <button class="v" aria-label="合并"><svg class="i"><use href="#join"/></svg></button>
      <button class="v" aria-label="倒角"><svg class="i"><use href="#chamfer"/></svg></button>
      <button class="v" aria-label="圆角"><svg class="i"><use href="#fillet"/></svg></button>
      <button class="v" aria-label="光顺曲线"><svg class="i"><use href="#blend"/></svg></button>
      <button class="v" aria-label="分解"><svg class="i"><use href="#explode"/></svg></button>
    </div>
    <div class="vbar"><span class="vgrip"></span>
      <button class="v" aria-label="前置"><svg class="i"><use href="#front"/></svg></button>
      <button class="v" aria-label="后置"><svg class="i"><use href="#back"/></svg></button>
      <button class="v" aria-label="置于对象之上"><svg class="i"><use href="#above"/></svg></button>
      <button class="v" aria-label="置于对象之下"><svg class="i"><use href="#under"/></svg></button>
      <i class="vsep"></i>
      <button class="v abc" aria-label="文字前置"><span>ABC</span><svg class="i"><path d="M4.500 1v8h11V1h-3"/><path d="M18 6v5h-5z" fill="#000" stroke="none"/></svg></button>
    </div>
  </aside>
</div>

<section class="cmd">
  <div class="cmdside"><span class="vgrip"></span><button aria-label="关闭">✕</button><button aria-label="自定义"><svg class="i"><use href="#wrench"/></svg></button></div>
  <div class="cmdmain">
    <div class="history"><p>选择对象或<span> &lt;</span>全部选择<span>&gt;:</span></p><p>选择要延伸的对象<span>, </span>或按住<span> Shift </span>键选择要修剪的对象<span>, </span>或</p></div>
    <label class="prompt"><svg class="i"><use href="#extend"/></svg><i class="tri"></i><strong>EXTEND</strong><span class="opts">[<button>栏选<span>(<em>F</em>)</span></button><button>窗交<span>(<em>C</em>)</span></button><button>投影<span>(<em>P</em>)</span></button><button>边<span>(<em>E</em>)</span></button><button>放弃<span>(<em>U</em>)</span></button>]:</span><input type="text" aria-label="命令"></label>
  </div>
</section>

<footer class="status">
  <div class="coords">17134.0514, 16713.2418, 0.0000</div>
  <div class="toggles">
    <button class="s" aria-label="推断约束"><svg class="i"><use href="#snapi"/></svg></button>
    <button class="s" aria-label="捕捉"><svg class="i"><use href="#dots"/></svg></button>
    <button class="s on" aria-label="栅格"><svg class="i"><use href="#gridi"/></svg></button>
    <button class="s" aria-label="正交"><svg class="i"><use href="#ortho"/></svg></button>
    <button class="s" aria-label="极轴"><svg class="i"><use href="#polar"/></svg></button>
    <button class="s on" aria-label="对象捕捉"><svg class="i"><use href="#osnap"/></svg></button>
    <button class="s" aria-label="三维对象捕捉"><svg class="i"><use href="#os3"/></svg></button>
    <button class="s on" aria-label="对象追踪"><svg class="i"><use href="#otrack"/></svg></button>
    <button class="s on" aria-label="动态 UCS"><svg class="i"><use href="#ducs"/></svg></button>
    <button class="s" aria-label="动态输入"><svg class="i"><use href="#dyn"/></svg></button>
    <button class="s" aria-label="线宽"><svg class="i"><use href="#lwt"/></svg></button>
    <button class="s on" aria-label="透明度"><svg class="i"><use href="#tpy"/></svg></button>
    <button class="s" aria-label="快捷特性"><svg class="i"><use href="#qp"/></svg></button>
    <button class="s" aria-label="选择循环"><svg class="i"><use href="#sc"/></svg></button>
    <button class="s" aria-label="注释监视器"><svg class="i"><use href="#am"/></svg></button>
  </div>
  <div class="toggles end">
    <button class="s txt">模型</button>
    <button class="s" aria-label="布局"><svg class="i"><use href="#pspace"/></svg></button>
    <button class="s" aria-label="快速查看"><svg class="i"><use href="#qv"/></svg></button>
    <i class="gap18"></i>
    <button class="s scale"><svg class="i"><use href="#ann"/></svg>1:1<span class="tri"></span></button>
    <button class="s" aria-label="注释可见性"><svg class="i"><use href="#annv"/></svg></button>
    <button class="s" aria-label="自动缩放"><svg class="i"><use href="#anna"/></svg></button>
    <i class="gap6"></i>
    <button class="s" aria-label="切换工作空间"><svg class="i"><use href="#gear"/></svg></button>
    <button class="s" aria-label="锁定"><svg class="i"><use href="#unlock"/></svg></button>
    <button class="s" aria-label="硬件加速"><svg class="i"><use href="#hw"/></svg></button>
    <span class="tray"><svg class="i"><use href="#dwgok"/></svg><svg class="i"><use href="#bulb"/></svg></span>
    <button class="s slim" aria-label="状态栏菜单"><span class="tri"></span></button>
    <button class="s" aria-label="全屏显示"><svg class="i"><use href="#clean"/></svg></button>
    <i class="resize"></i>
  </div>
</footer>
</div>
</body>
</html>
```

FILE: styles.css
```css
* { box-sizing: border-box; }
body {
  margin: 0;
  background: #050506;
  font: 12px/16px "Noto Sans", "Noto Sans CJK SC", sans-serif;
  color: #222;
}
button, select, input { font: inherit; color: inherit; }
button { margin: 0; padding: 0; border: 0; background: none; }
h2, p { margin: 0; font-weight: normal; }
i, em { font-style: normal; }
.defs { position: absolute; width: 0; height: 0; }
.i { width: 18px; height: 18px; flex: none; display: block; fill: none; stroke: #3a3f47; }
.tri { width: 0; height: 0; border: 4px solid transparent; border-top: 5px solid #444; border-bottom: 0; }

.app { display: flex; flex-direction: column; height: 100vh; min-height: 720px; padding: 0 12px 7px 8px; background: #666; box-shadow: inset 6px 0 #08080a, inset 7px 0 #8a8a8a, inset -10px 0 #0a0b0c, inset -11px 0 #777, inset 0 -6px #060607, inset 0 -7px #999; }

/* title bar and menu */
.top { display: grid; grid-template-columns: 41px 1fr; grid-template-rows: 16px 23px; }
.logo { grid-row: 1 / 3; height: 33px; display: flex; align-items: flex-start; padding: 0 0 0 2px; border: 1px solid #444; border-top: 0; background: linear-gradient(#999, #c6c6c6 45%, #858585); overflow: hidden; position: relative; z-index: 1; }
.logo svg { flex: none; }
.logo .tri { position: absolute; right: 2px; top: 11px; }
.titlebar { display: flex; align-items: flex-end; overflow: hidden; background: #0b0c0d; border-bottom: 1px solid #222; }
.quick, .info { display: flex; align-items: center; height: 22px; flex: none; background: linear-gradient(#8a8a8a, #a5a5a5 70%, #8a8a8a); }
.quick { padding-left: 5px; width: 429px; }
.quick .b { width: 24px; }
.quick .dd { width: 12px; }
.ws-top.combo { flex: 1; height: 22px; border: 1px solid #777; border-radius: 0; background: #b0b0b0; color: #444; }
.ws-top select { padding-left: 2px; }
.quick .more { width: 17px; height: 22px; background: #777; }
.more .tri { border-top-color: #000; }
.caption { display: flex; flex: 1; justify-content: space-between; align-items: center; height: 28px; padding: 0 16px; overflow: hidden; color: #0c0c0c; font-family: "Open Sans", sans-serif; font-size: 13px; white-space: nowrap; background: radial-gradient(ellipse at 50% 30%, #777, #444 50%, #111 78%, #000); }
.info { width: 446px; }
.info .side { width: 16px; height: 22px; background: #888; }
.side i { border: 4px solid transparent; border-left: 5px solid #000; border-right: 0; }
.search { width: 178px; height: 22px; padding: 4px 3px 0; border: 0; background: #f2f2f2; }
.search::placeholder { font-style: italic; color: #666; opacity: 1; }
.login { display: flex; align-items: center; gap: 4px; color: #fff; }
.info .b { width: 26px; }
.push { margin-left: auto; }
.helpb { margin-left: 10px; }
.syswin { display: flex; flex: none; width: 122px; height: 16px; padding: 0 0 0 19px; align-items: flex-start; }
.syswin button { width: 26px; height: 6px; border: 1px solid #777; border-top: 0; border-radius: 0 0 3px 3px; background: #111; }
.syswin button:last-child { width: 48px; }
.menu { display: flex; align-items: center; gap: 25px; margin-left: -7px; padding-left: 21px; background: linear-gradient(#626262, #8d8d8d 60%, #808080 75%, #686868); color: #fff; white-space: nowrap; }
.menu button { line-height: 22px; }

/* toolbars */
.bars { display: flex; flex-direction: column; gap: 4px; flex: none; padding-bottom: 4px; }
.bar { display: flex; height: 23px; }
.grip { flex: none; width: 9px; background: #4a4a4a radial-gradient(circle at 1px 1px, #d0d0d0 1px, transparent 1px) 2px 4px / 3px 3px; border: 2px solid #4a4a4a; border-width: 4px 2px; }
.set + .grip { margin-left: 2px; width: 8px; }
.set { display: flex; align-items: center; background: #eeeeef; border-bottom: 1px solid #444; }
.b { width: 23px; height: 22px; flex: none; display: flex; align-items: center; justify-content: center; }
.wide { width: 25px; }
.dd { width: 13px; height: 20px; flex: none; display: flex; align-items: center; justify-content: center; }
.off { opacity: .5; }
.sep { flex: none; width: 1px; height: 19px; margin: 0 2px 0 3px; background: #888; }
.dbl { width: 3px; margin: 0 2px; background: linear-gradient(90deg, #888 1px, transparent 1px 2px, #888 2px); }
.combo { position: relative; display: flex; align-items: center; height: 22px; border: 1px solid #8c8c8c; border-radius: 3px; background: linear-gradient(#f3f3f3, #dedede); color: #777; }
.combo::after { content: ""; position: absolute; right: 5px; top: 8px; border: 4px solid transparent; border-top: 5px solid #555; border-bottom: 0; pointer-events: none; }
.combo select { flex: 1; min-width: 0; height: 20px; padding: 0 14px 0 4px; border: 0; background: transparent; appearance: none; outline: 0; opacity: 1; }
.pale { background: #f3f3f3; }
.combo.pale select { padding-left: 8px; }
.pale::after { opacity: .45; }
.combo.indent select { padding-left: 18px; }
.w120 { width: 120px; }
.w124 { width: 125px; }
.w148 { width: 149px; }
.w158 { width: 158px; }
.w174 { width: 174px; }
.layer { width: 299px; padding-left: 1px; }
.layer .i { width: 17px; }
.swatch { flex: none; width: 10px; height: 10px; margin-left: 4px; border: 1px solid #000; background: #fff; }
.layer .swatch { margin-left: 2px; }
.rule { flex: none; width: 60px; height: 1px; margin: 0 0 0 4px; background: #000; }
.short { width: 35px; }
.song { font-family: "Liberation Serif", serif; }
.song .mono { font-family: "Liberation Mono", monospace; font-size: 10px; }

/* workspace */
.work { display: flex; flex: 1; min-height: 0; }
.side-tools { width: 25px; flex: none; overflow: hidden; padding-top: 1px; }
.right { margin-right: 3px; }
.vbar { display: flex; flex-direction: column; align-items: center; background: #ececed; border: 1px solid #444; border-width: 0 1px 1px 0; }
.vbar + .vbar { margin-top: 1px; }
.vgrip { align-self: stretch; height: 8px; flex: none; border: 2px solid #4b4b4b; border-width: 2px 3px; background: radial-gradient(circle at 1px 1px, #bbb 1px, #4b4b4b 1px) 0 0 / 3px 3px; }
.v { width: 24px; height: 22px; flex: none; display: flex; align-items: center; justify-content: center; }
.vsep { width: 18px; height: 1px; margin: 2px 0; background: #aaa; }
.abc { flex-direction: column; height: 28px; font: bold 8px/8px "Liberation Mono", monospace; color: #000; }
.abc .i { height: 12px; }
.mdi { display: flex; flex: 1; min-width: 0; margin: 0 4px 4px; padding: 2px 3px 3px 4px; border: 1px solid #bbb; border-width: 1px 2px 2px 1px; background: repeating-linear-gradient(135deg, #4b4b4b 0 2px, #5a5a5a 2px 4px); }
.win { display: flex; flex-direction: column; min-width: 0; padding: 0 7px; border: 1px solid #2b3036; border-radius: 6px 6px 0 0; box-shadow: inset 1px 1px #f5faff; padding-bottom: 7px; }
.back { flex: 434 1 0; margin-top: 3px; background: linear-gradient(#c0d2e6, #d7e4f2 30px, #dae5f3); }
.front { flex: 723 1 0; background: linear-gradient(#98b8dc, #b8d0ea 30px, #b9d1ea); border-right-color: #33aebf; border-bottom-color: #33aebf; }
.wtitle { display: flex; align-items: center; height: 28px; flex: none; gap: 2px; padding-top: 4px; }
h2 { flex: 1; font-family: "Open Sans", sans-serif; font-size: 13px; line-height: 20px; color: #111; overflow: hidden; }
.back h2 { color: #555; }
.wb { display: flex; align-items: center; justify-content: center; width: 31px; height: 17px; flex: none; border: 1px solid #7d92ad; border-radius: 2px; background: linear-gradient(#dce8f5, #b6c9df 50%, #bfd1e5); }
.back .wb { background: #c9d9ea; }
.wb.close { border-color: #632c2c; background: linear-gradient(#e09a8e, #c34a38 50%, #b93a2a); }
.min { width: 12px; height: 5px; margin-top: 5px; border: 1px solid #4a5360; border-radius: 1px; background: #fff; }
.max { width: 11px; height: 9px; border: 1px solid #4a5360; border-radius: 1px; background: #fff; display: flex; align-items: center; justify-content: center; }
.max::after { content: ""; width: 5px; height: 3px; border: 1px solid #4a5360; }
.wbody { display: grid; grid-template: minmax(0, 1fr) 15px / minmax(0, 1fr) 17px; flex: 1; min-height: 0; border: 1px solid #6d7680; border-right-color: #fff; border-bottom-color: #fff; background: #f0f0f0; }
.view { position: relative; overflow: hidden; background: #202731; }
.canvas { display: block; width: 100%; height: 100%; }
.vlabel { position: absolute; left: 4px; top: 4px; font-size: 12px; line-height: 18px; color: #f0f0f0; }
.cube { position: absolute; right: 9px; top: 6px; display: flex; flex-direction: column; align-items: center; gap: 11px; }
.big { right: 10px; top: 9px; }
.cube text { fill: #b4b4b4; font-size: 11px; text-anchor: middle; }
.big text { font-size: 12px; }
.cube svg { flex: none; }
.wcs { width: 48px; height: 17px; border: 1px solid #a5a6b2; border-radius: 4px; background: #9091a0; color: #50525e; font: 11px/14px "Liberation Sans", sans-serif; }
.wcs span { font-size: 9px; color: #b5b6c2; }
.vs, .hs { display: flex; align-items: center; background: #f0f0f0; }
.vs { flex-direction: column; }
.vs button, .hs button { display: flex; align-items: center; justify-content: center; width: 17px; height: 17px; flex: none; }
.hs button { height: 14px; }
.vs button::before, .hs button::before { content: ""; border: 3px solid transparent; }
.vs .up::before { border-bottom: 4px solid #333; border-top: 0; }
.vs .down::before { border-top: 4px solid #333; border-bottom: 0; }
.hs .prev::before { border-right: 4px solid #333; border-left: 0; }
.hs .next::before { border-left: 4px solid #333; border-right: 0; }
.hs { width: 34%; }
.vs b, .hs b { width: 15px; height: 15px; flex: none; border: 1px solid #999; border-radius: 2px; background: linear-gradient(135deg, #fafafa, #c9c9c9); }
.hs b { height: 14px; }
.split { width: 5px; height: 12px; flex: none; border: 1px solid #999; border-right: 0; border-radius: 2px; }
.g310 { flex: 310; } .g110 { flex: 110; } .g43 { flex: 43; } .g380 { flex: 380; }
.g26 { flex: 26; } .g63 { flex: 63; } .g146 { flex: 146; } .g42 { flex: 42; }
.foot { display: flex; min-width: 0; border-top: 1px solid #888; }
.tabs { display: flex; flex: 1; min-width: 0; overflow: hidden; }
.nv { width: 14px; flex: none; font-size: 8px; line-height: 14px; color: #555; border-right: 1px solid #999; border-bottom: 1px solid #999; white-space: nowrap; }
.tab { position: relative; flex: none; width: 46px; line-height: 14px; color: #000; border-bottom: 1px solid #888; }
.tab::after { content: ""; position: absolute; right: 0; top: 0; width: 1px; height: 14px; background: #555; transform: skewX(-25deg); }
.tab.on { width: 44px; color: #fff; background: #202731; clip-path: polygon(2px 0, 100% 0, 38px 100%, 8px 100%); }

/* command line */
.cmd { display: flex; flex: none; height: 58px; margin-right: 1px; border-top: 1px solid #888; }
.cmdside { width: 22px; display: flex; flex-direction: column; align-items: center; justify-content: space-between; padding: 4px 2px 3px; background: linear-gradient(#8e8e8e, #4e4e4e); color: #fff; }
.cmdside .vgrip { border: 0; background: radial-gradient(circle at 1px 1px, #ddd 1px, transparent 1px) 0 0 / 3px 3px; }
.cmdside button { font-size: 14px; }
.cmdmain { flex: 1; display: flex; flex-direction: column; min-width: 0; background: #c8c8c8; }
.history { flex: 1; padding: 1px 3px; font: 13px/15px "Noto Sans CJK SC", sans-serif; color: #111; }
.history span, .opts span { font: 12px/12px "DejaVu Sans Mono", monospace; white-space: pre; }
.prompt { display: flex; align-items: center; height: 23px; padding-left: 4px; border-top: 1px solid #777; background: #fff; font: 13px/17px "DejaVu Sans Mono", "Noto Sans CJK SC", monospace; color: #000; white-space: nowrap; }
.prompt .tri { margin: 0 9px 0 0; border-width: 3px 3px 0; border-top-color: #999; }
.prompt strong { font-size: 12px; margin-right: 4px; }
.opts { display: flex; align-items: center; }
.opts button { margin-right: 4px; padding: 0 1px; border-radius: 3px; background: #d9d9d9; }
.opts button:last-of-type { margin-right: 0; }
.opts em { color: #2020c8; }
.prompt input { flex: 1; min-width: 0; border: 0; outline: 0; background: none; }

/* status bar */
.status { display: flex; align-items: stretch; flex: none; height: 23px; margin-right: 1px; border-top: 2px solid #222; background: linear-gradient(#787878, #929292); }
.coords { width: 218px; padding-left: 12px; font: 10px/21px "Liberation Mono", monospace; color: #000; background: linear-gradient(#989898, #777); border-right: 1px solid #444; }
.toggles { display: flex; }
.end { margin-left: auto; }
.s { width: 22px; flex: none; display: flex; align-items: center; justify-content: center; border-right: 1px solid #555; background: linear-gradient(#c0c0c0, #a0a0a0); }
.s.on { background: linear-gradient(#eefaff, #9fd0e6); }
.txt { width: 30px; color: #000; }
.gap18 { width: 18px; }
.gap6 { width: 6px; }
.scale { width: 54px; gap: 2px; color: #000; }
.s .tri { border-top-color: #000; }
.tray { display: flex; align-items: center; gap: 4px; width: 55px; padding: 0 7px 0 5px; border: 2px solid #555; background: #858585; }
.slim { width: 12px; }
.slim .tri { border-width: 4px 3px 0; }
.resize { width: 15px; background: radial-gradient(circle at 2px 2px, #eee 1px, transparent 1px) 0 0 / 4px 4px; clip-path: polygon(100% 30%, 100% 100%, 20% 100%); }
```
